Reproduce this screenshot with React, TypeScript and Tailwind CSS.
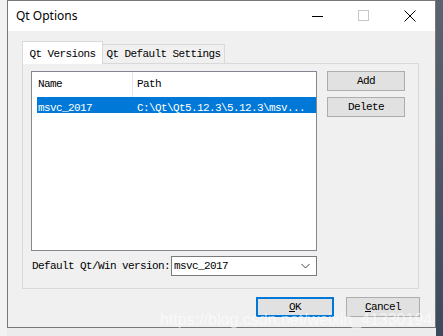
import React from "react";

const mono = "font-['Liberation_Mono',monospace] text-[11px] tracking-[-0.6px] leading-none";

function TitleBar() {
  return (
    <div className="h-[30px] bg-white flex items-center">
      <span className="ml-[8px] text-[12px] text-black font-['Noto_Sans',sans-serif]">Qt Options</span>
      <div className="ml-auto flex items-center h-full">
        {/* minimize */}
        <div className="w-[46px] h-full flex items-center justify-center">
          <svg width="12" height="12" viewBox="0 0 12 12"><path d="M0 6.5h11" stroke="#000" strokeWidth="1" /></svg>
        </div>
        {/* maximize (disabled) */}
        <div className="w-[46px] h-full flex items-center justify-center">
          <svg width="12" height="12" viewBox="0 0 12 12"><rect x="0.5" y="0.5" width="10" height="10" fill="none" stroke="#c6c6c6" /></svg>
        </div>
        {/* close */}
        <div className="w-[46px] h-full flex items-center justify-center mr-[2px]">
          <svg width="12" height="12" viewBox="0 0 12 12"><path d="M0.5 0.5l11 11M11.5 0.5l-11 11" stroke="#000" strokeWidth="1" /></svg>
        </div>
      </div>
    </div>
  );
}

function Btn({ label, u, focus, w }: { label: string; u?: boolean; focus?: boolean; w: string }) {
  return (
    <div
      className={
        "h-[20px] flex items-center justify-center bg-[#e1e1e1] " + w + " " +
        (focus ? "border-2 border-[#0078d7]" : "border border-[#adadad]")
      }
    >
      <span className={mono + " text-black"}>
        {u ? <><span className="underline">{label[0]}</span>{label.slice(1)}</> : label}
      </span>
    </div>
  );
}

export default function App() {
  return (
    <div className="w-[443px] h-[336px] bg-[#ececec] flex overflow-hidden relative">
      <div className="w-[7px] bg-[#f2f2f2]" />
      <div className="flex flex-col">
        <div className="w-[429px] h-[328px] border border-[#777777] flex flex-col bg-[#f0f0f0]">
          <TitleBar />
          <div className="flex-1 pl-[14px] pt-[10px] flex flex-col">
            {/* tabs */}
            <div className="flex items-end h-[22px]">
              <div className="w-[81px] h-[23px] bg-white border border-b-0 border-[#d9d9d9] flex items-center justify-center relative z-10 mb-[-1px] pt-[2px]">
                <span className={mono + " text-black"}>Qt Versions</span>
              </div>
              <div className="w-[122px] h-[19px] bg-[#f0f0f0] border border-l-0 border-b-0 border-[#d9d9d9] flex items-center justify-center pt-[1px]">
                <span className={mono + " text-black"}>Qt Default Settings</span>
              </div>
            </div>
            {/* pane */}
            <div className="w-[397px] h-[226px] border border-[#d9d9d9] bg-[#f0f0f0] pl-[8px] pt-[7px] flex flex-col">
              <div className="flex">
                <div className="w-[286px] h-[180px] border border-[#828790] bg-white flex flex-col">
                  <div className="h-[25px] flex items-center">
                    <div className="w-[101px] h-full border-r border-[#e5e5e5] flex items-center pl-[6px]">
                      <span className={mono + " text-black"}>Name</span>
                    </div>
                    <div className="flex-1 h-full flex items-center pl-[4px]">
                      <span className={mono + " text-black"}>Path</span>
                    </div>
                  </div>
                  <div className="h-[16px] ml-[5px] bg-[#0078d7] flex items-center">
                    <div className="w-[96px] pl-[1px]">
                      <span className={mono + " text-white"}>msvc_2017</span>
                    </div>
                    <div className="pl-[4px]">
                      <span className={mono + " text-white"}>C:\Qt\Qt5.12.3\5.12.3\msv...</span>
                    </div>
                  </div>
                </div>
                <div className="ml-[10px] flex flex-col gap-[6px]">
                  <Btn label="Add" w="w-[78px]" />
                  <Btn label="Delete" w="w-[78px]" />
                </div>
              </div>
              <div className="mt-[5px] flex items-center">
                <span className={mono + " text-black ml-[1px] w-[139px]"}>Default Qt/Win version:</span>
                <div className="w-[146px] h-[20px] bg-white border border-[#7a7a7a] flex items-center pl-[2px] pr-[6px]">
                  <span className={mono + " text-black"}>msvc_2017</span>
                  <svg className="ml-auto" width="9" height="6" viewBox="0 0 9 6"><path d="M0.5 1l4 4 4-4" fill="none" stroke="#444" strokeWidth="1" /></svg>
                </div>
              </div>
            </div>
            {/* bottom buttons */}
            <div className="mt-[8px] flex gap-[12px] pl-[234px]">
              <Btn label="OK" u focus w="w-[78px]" />
              <Btn label="Cancel" u w="w-[74px]" />
            </div>
          </div>
        </div>
      </div>
      <div className="flex-1 bg-gradient-to-b from-[#5c6370] to-[#3c4a60]" />
      {/* watermark overlay */}
      <span className="absolute left-[160px] top-[308px] text-[16px] text-white/60 font-['Liberation_Sans',sans-serif]">
        https://blog.csdn.net/weixin_41330194
      </span>
    </div>
  );
}
